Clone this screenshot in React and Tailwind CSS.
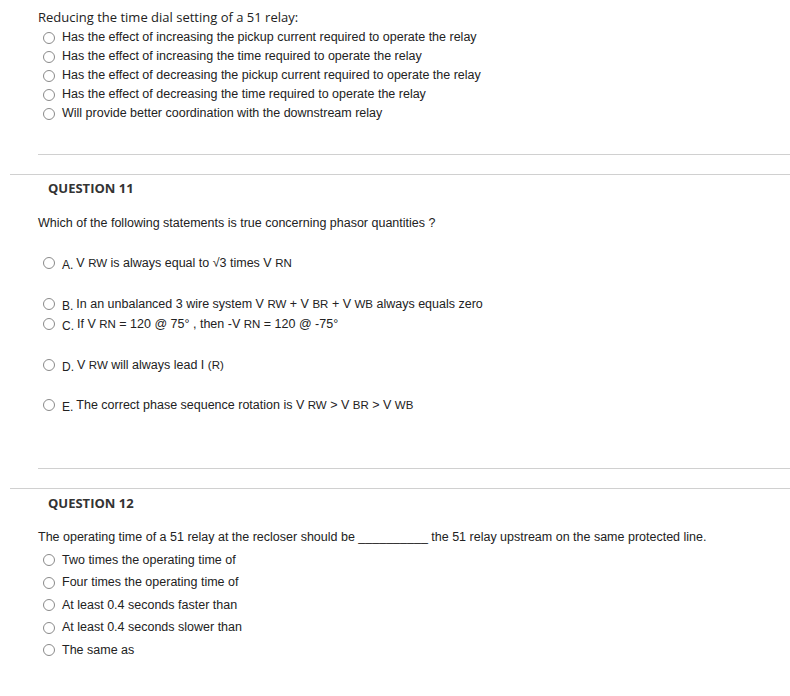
import React from 'react';

const Radio = () => (
  <span className="inline-block w-[12px] h-[12px] rounded-full border border-[#8a8a8a] bg-white shrink-0" />
);

const Option = ({ children, className = '' }) => (
  <label className={`flex items-center gap-[7px] ${className}`}>
    <Radio />
    <span className="whitespace-nowrap">{children}</span>
  </label>
);

const Sm = ({ children }) => <span className="text-[11.5px]">{children}</span>;

const Letter = ({ children }) => (
  <span className="text-[12px] relative top-[2px] mr-[3px]">{children}</span>
);

const q10 = [
  'Has the effect of increasing the pickup current required to operate the relay',
  'Has the effect of increasing the time required to operate the relay',
  'Has the effect of decreasing the pickup current required to operate the relay',
  'Has the effect of decreasing the time required to operate the relay',
  'Will provide better coordination with the downstream relay',
];

const q12 = [
  'Two times the operating time of',
  'Four times the operating time of',
  'At least 0.4 seconds faster than',
  'At least 0.4 seconds slower than',
  'The same as',
];

export default function App() {
  return (
    <div className="w-[790px] h-[696px] bg-white text-[#222] font-['Liberation_Sans',Arial,sans-serif] text-[12.5px] overflow-hidden">
      {/* Question 10 tail */}
      <div className="pl-[38px] pt-[8px]">
        <p className="font-['Open_Sans',sans-serif] text-[13px] leading-[18px] text-[#222]">
          Reducing the time dial setting of a 51 relay:
        </p>
        <div className="pl-[5px] pt-[2px] flex flex-col">
          {q10.map((t, i) => (
            <Option key={i} className="h-[19px]">{t}</Option>
          ))}
        </div>
      </div>

      <div className="ml-[38px] mt-[31px] border-t border-[#d0d0d0]" />
      <div className="ml-[10px] mt-[19px] border-t border-[#d0d0d0]" />

      {/* Question 11 */}
      <div className="pl-[48px] pt-[4px]">
        <h3 className="font-['Open_Sans',sans-serif] font-bold text-[13px] leading-[18px] text-[#333]">
          QUESTION 11
        </h3>
      </div>
      <div className="pl-[38px] pt-[18px]">
        <p className="leading-[16px]">Which of the following statements is true concerning phasor quantities ?</p>
        <div className="pl-[5px] flex flex-col mt-[24px]">
          <Option className="h-[16px]">
            <Letter>A.</Letter>V <Sm>RW</Sm> is always equal to √3 times V <Sm>RN</Sm>
          </Option>
          <Option className="h-[16px] mt-[25px]">
            <Letter>B.</Letter>In an unbalanced 3 wire system V <Sm>RW</Sm> + V <Sm>BR</Sm> + V <Sm>WB</Sm> always equals zero
          </Option>
          <Option className="h-[16px] mt-[4px]">
            <Letter>C.</Letter>If V <Sm>RN</Sm> = 120 @ 75° , then -V <Sm>RN</Sm> = 120 @ -75°
          </Option>
          <Option className="h-[16px] mt-[25px]">
            <Letter>D.</Letter>V <Sm>RW</Sm> will always lead I <Sm>(R)</Sm>
          </Option>
          <Option className="h-[16px] mt-[24px]">
            <Letter>E.</Letter>The correct phase sequence rotation is V <Sm>RW</Sm> &gt; V <Sm>BR</Sm> &gt; V <Sm>WB</Sm>
          </Option>
        </div>
      </div>

      <div className="ml-[38px] mt-[55px] border-t border-[#d0d0d0]" />
      <div className="ml-[10px] mt-[19px] border-t border-[#d0d0d0]" />

      {/* Question 12 */}
      <div className="pl-[48px] pt-[5px]">
        <h3 className="font-['Open_Sans',sans-serif] font-bold text-[13px] leading-[18px] text-[#333]">
          QUESTION 12
        </h3>
      </div>
      <div className="pl-[38px] pt-[17px]">
        <p className="leading-[16px] whitespace-nowrap">
          The operating time of a 51 relay at the recloser should be __________ the 51 relay upstream on the same protected line.
        </p>
        <div className="pl-[5px] flex flex-col mt-[4px]">
          {q12.map((t, i) => (
            <Option key={i} className="h-[22.5px]">{t}</Option>
          ))}
        </div>
      </div>
    </div>
  );
}
